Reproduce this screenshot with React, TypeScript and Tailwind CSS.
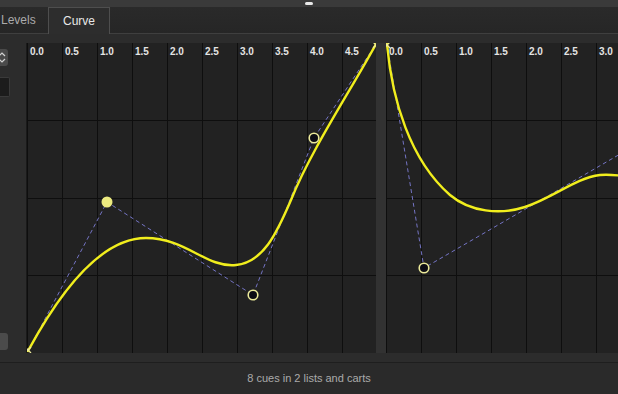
import React from "react";

const font = { fontFamily: '"Liberation Sans", Arial, sans-serif' };

type GraphProps = {
    labels: string[];
    curve: string;
    dashed: string;
    filled?: [number, number][];
    hollow: [number, number][];
    ends: [number, number][];
    className: string;
};

function Graph({ labels, curve, dashed, filled = [], hollow, ends, className }: GraphProps) {
    return (
        <div className={`relative h-full overflow-hidden bg-[#222222] ${className}`}>
            <div className="flex h-full">
                {labels.map((label) => (
                    <div
                        key={label}
                        className="h-full w-[35px] shrink-0 border-l border-[#0e0e0e] pl-[2px] pt-[4px] text-[10px] font-bold leading-none text-[#e4e4e4]"
                    >
                        {label}
                    </div>
                ))}
            </div>
            <svg className="pointer-events-none absolute left-0 top-0 h-full w-full overflow-visible">
                {[77, 155, 232].map((y) => (
                    <line key={y} x1="0" x2="800" y1={y + 0.5} y2={y + 0.5} stroke="#0e0e0e" strokeWidth="1.2" />
                ))}
                <polyline points={dashed} fill="none" stroke="#7474c4" strokeWidth="1" strokeDasharray="4 3" />
                <path d={curve} fill="none" stroke="#f1ee1d" strokeWidth="2.4" strokeLinecap="round" />
                {ends.map(([x, y]) => (
                    <g key={`${x}-${y}`} stroke="#ecea9a" strokeWidth="1.3">
                        <line x1={x - 3} y1={y - 3} x2={x + 3} y2={y + 3} />
                        <line x1={x + 3} y1={y - 3} x2={x - 3} y2={y + 3} />
                    </g>
                ))}
                {filled.map(([x, y]) => (
                    <circle key={`${x}-${y}`} cx={x} cy={y} r="5.5" fill="#ecea80" />
                ))}
                {hollow.map(([x, y]) => (
                    <circle key={`${x}-${y}`} cx={x} cy={y} r="4.8" fill="#0c0c14" stroke="#ecea9a" strokeWidth="1.6" />
                ))}
            </svg>
        </div>
    );
}

export default function App() {
    return (
        <div className="flex h-[394px] w-[618px] flex-col overflow-hidden bg-[#2c2c2c]" style={font}>
            {/* window strip */}
            <div className="flex h-[7px] shrink-0 justify-center bg-[#3a3a3a] pt-[2px]">
                <div className="h-[3px] w-[8px] rounded-full bg-[#e8e8e8]" />
            </div>

            {/* tabs */}
            <div className="flex h-[27px] shrink-0 items-stretch border-b border-[#3f3f3f] bg-gradient-to-b from-[#2a2a2a] to-[#262626]">
                <div className="flex w-[48px] items-center pl-[1px] text-[12px] text-[#ababab]">Levels</div>
                <div className="-mb-px flex w-[62px] items-center justify-center border-x border-t border-[#4e4e4e] bg-[#2d2d2d] text-[12px] text-[#e8e8e8]">
                    Curve
                </div>
            </div>

            {/* content */}
            <div className="flex min-h-0 flex-1 pb-[9px] pt-[9px]">
                <div className="flex w-[26px] shrink-0 flex-col">
                    <div className="mt-[6px] flex h-[17px] w-[16px] -translate-x-[8px] flex-col items-end justify-center rounded-[3px] bg-[#4a4a4a] pr-[2px]">
                        <svg width="8" height="13" viewBox="0 0 8 13">
                            <path d="M1 5 L4 2 L7 5" fill="none" stroke="#d4d4d4" strokeWidth="1.2" />
                            <path d="M1 8 L4 11 L7 8" fill="none" stroke="#d4d4d4" strokeWidth="1.2" />
                        </svg>
                    </div>
                    <div className="mt-[11px] h-[20px] w-[10px] rounded-r-[2px] border-y border-r border-[#3a3a3a] bg-[#1c1c1c]" />
                    <div className="flex-1" />
                    <div className="mb-[3px] h-[17px] w-[8px] rounded-r-[3px] bg-[#4b4b4b]" />
                </div>
                <div className="w-px shrink-0 bg-[#1a1a1a]" />
                <Graph
                    className="w-[349px] shrink-0"
                    labels={["0.0", "0.5", "1.0", "1.5", "2.0", "2.5", "3.0", "3.5", "4.0", "4.5"]}
                    curve="M1,308 C34,247 74,195 119,195 C159,195 179,225 209,222 C236,219 249,192 264,157 C284,107 324,47 349,1"
                    dashed="1,308 80,159 226,252 287,95 349,1"
                    filled={[[80, 159]]}
                    hollow={[
                        [226, 252],
                        [287, 95],
                    ]}
                    ends={[
                        [1, 307],
                        [349, 2],
                    ]}
                />
                <div className="w-[10px] shrink-0 bg-[#323232]" />
                <Graph
                    className="flex-1"
                    labels={["0.0", "0.5", "1.0", "1.5", "2.0", "2.5", "3.0"]}
                    curve="M1,1 C6,57 24,117 64,152 C84,169 114,172 139,164 C169,154 189,135 214,132 C222,131 229,132 238,133"
                    dashed="1,1 38,225 260,96"
                    hollow={[[38, 225]]}
                    ends={[[1, 2]]}
                />
            </div>

            {/* status */}
            <div className="flex h-[32px] shrink-0 items-center justify-center border-t border-[#1e1e1e] bg-[#2a2a2a] text-[11px] text-[#ababab]">
                8 cues in 2 lists and carts
            </div>
        </div>
    );
}
